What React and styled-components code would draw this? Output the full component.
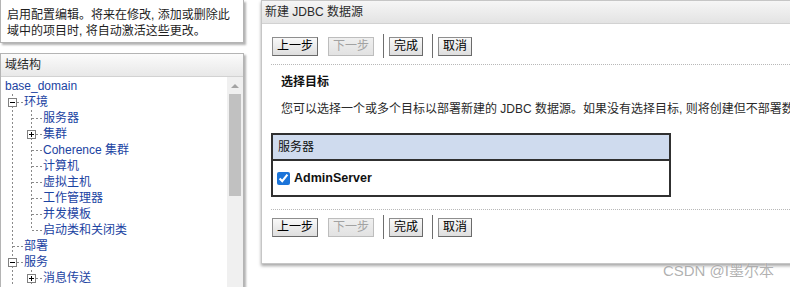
import React from 'react';
import styled, { createGlobalStyle, css } from 'styled-components';

const GlobalStyle = createGlobalStyle`
  html, body {
    margin: 0;
    padding: 0;
    background: #ffffff;
    overflow: hidden;
  }
  body {
    font-family: "Liberation Sans", "Noto Sans CJK SC", sans-serif;
    font-size: 12px;
    color: #222;
  }
`;

// 트리 데이터: cells = 앞쪽 연결선 종류, toggle = 펼침 박스
const treeRows = [
  { label: 'base_domain', cells: [] },
  { label: '环境', cells: ['tee'], toggle: 'minus' },
  { label: '服务器', cells: ['pipe', 'tee'] },
  { label: '集群', cells: ['pipe', 'tee'], toggle: 'plus' },
  { label: 'Coherence 集群', cells: ['pipe', 'tee'] },
  { label: '计算机', cells: ['pipe', 'tee'] },
  { label: '虚拟主机', cells: ['pipe', 'tee'] },
  { label: '工作管理器', cells: ['pipe', 'tee'] },
  { label: '并发模板', cells: ['pipe', 'tee'] },
  { label: '启动类和关闭类', cells: ['pipe', 'elbow'] },
  { label: '部署', cells: ['tee'] },
  { label: '服务', cells: ['tee'], toggle: 'minus' },
  { label: '消息传送', cells: ['pipe', 'tee'], toggle: 'plus' },
];

const WizardButtons = () => (
  <StButtonBar>
    <StButton>上一步</StButton>
    <StButton disabled>下一步</StButton>
    <StSeparator />
    <StButton>完成</StButton>
    <StSeparator />
    <StButton>取消</StButton>
  </StButtonBar>
);

const App = () => {
  return (
    <>
      <GlobalStyle />
      <StPage>
        <StLeftCol>
          <StHelpBox>
            启用配置编辑。将来在修改, 添加或删除此
            <br />
            域中的项目时, 将自动激活这些更改。
          </StHelpBox>

          <StTreePanel>
            <StPanelHeader>域结构</StPanelHeader>
            <StTreeBody>
              <StTree>
                {treeRows.map((row) => (
                  <StTreeRow key={row.label}>
                    {row.cells.map((cell, i) => (
                      <StGutter key={i} $kind={cell}>
                        {row.toggle && i === row.cells.length - 1 && (
                          <StToggle $plus={row.toggle === 'plus'} />
                        )}
                      </StGutter>
                    ))}
                    <StTreeLink>{row.label}</StTreeLink>
                  </StTreeRow>
                ))}
              </StTree>
              <StScrollbar>
                <StScrollArrow />
                <StScrollThumb />
              </StScrollbar>
            </StTreeBody>
          </StTreePanel>
        </StLeftCol>

        <StMainPanel>
          <StPanelHeader $main>新建 JDBC 数据源</StPanelHeader>
          <StContent>
            <WizardButtons />
            <StDivider />
            <StSectionTitle>选择目标</StSectionTitle>
            <StDescription>
              您可以选择一个或多个目标以部署新建的 JDBC 数据源。如果没有选择目标, 则将创建但不部署数
            </StDescription>
            <StTable>
              <StTableHead>服务器</StTableHead>
              <StTableRow>
                <StCheckbox type='checkbox' checked readOnly />
                <StServerName>AdminServer</StServerName>
              </StTableRow>
            </StTable>
            <StDivider $bottom />
            <WizardButtons />
          </StContent>
        </StMainPanel>

        <StWatermark>CSDN @I墨尔本</StWatermark>
      </StPage>
    </>
  );
};

export default App;

const StPage = styled.div`
  position: relative;
  width: 790px;
  height: 287px;
  overflow: hidden;
  display: flex;
  align-items: flex-start;
`;

const StLeftCol = styled.div`
  width: 244px;
  flex-shrink: 0;
  display: flex;
  flex-direction: column;
`;

const StHelpBox = styled.div`
  box-sizing: border-box;
  width: 244px;
  padding: 7px 6px 3px;
  line-height: 16px;
  color: #1e1e1e;
  background: #ffffff;
  border: 1px solid #b4b4b4;
  border-top: none;
  box-shadow: 2px 2px 2px rgba(0, 0, 0, 0.3);
`;

const StTreePanel = styled.div`
  box-sizing: border-box;
  width: 244px;
  height: 300px;
  margin-top: 10px;
  background: #ffffff;
  border: 1px solid #b4b4b4;
  box-shadow: 2px 2px 2px rgba(0, 0, 0, 0.3);
  display: flex;
  flex-direction: column;
`;

const StPanelHeader = styled.div`
  height: 22px;
  line-height: 22px;
  padding-left: 4px;
  color: #2a2a2a;
  background: linear-gradient(#fbfbfb, #e8e8e8);
  border-bottom: 1px solid #d2d2d2;
  white-space: nowrap;
  ${(props) =>
    props.$main &&
    css`
      padding-left: 3px;
      background: linear-gradient(#f6f6f6, #e3e3e3);
    `}
`;

const StTreeBody = styled.div`
  flex: 1;
  display: flex;
  min-height: 0;
`;

const StTree = styled.div`
  flex: 1;
  padding: 1px 0 0 4px;
  overflow: hidden;
`;

const StTreeRow = styled.div`
  display: flex;
  height: 16px;
  line-height: 16px;
  white-space: nowrap;
`;

const dash = '#8a8a8a';

const StGutter = styled.span`
  position: relative;
  width: 19px;
  height: 16px;
  flex-shrink: 0;

  &::before {
    content: '';
    position: absolute;
    left: 7px;
    width: 1px;
    top: 0;
    background: repeating-linear-gradient(to bottom, ${dash} 0 2px, transparent 2px 4px);
    ${(props) =>
      props.$kind === 'elbow'
        ? css`height: 8px;`
        : css`height: 16px;`}
  }

  &::after {
    content: '';
    position: absolute;
    top: 8px;
    left: 8px;
    width: 10px;
    height: 1px;
    display: ${(props) => (props.$kind === 'pipe' ? 'none' : 'block')};
    background: repeating-linear-gradient(to right, ${dash} 0 2px, transparent 2px 4px);
  }
`;

const StToggle = styled.span`
  position: absolute;
  z-index: 1;
  left: 3px;
  top: 4px;
  box-sizing: border-box;
  width: 9px;
  height: 9px;
  background: #ffffff;
  border: 1px solid #808080;

  &::before {
    content: '';
    position: absolute;
    left: 1px;
    top: 3px;
    width: 5px;
    height: 1px;
    background: #000;
  }

  &::after {
    content: '';
    position: absolute;
    left: 3px;
    top: 1px;
    width: 1px;
    height: 5px;
    background: #000;
    display: ${(props) => (props.$plus ? 'block' : 'none')};
  }
`;

const StTreeLink = styled.span`
  color: #1b43a2;
`;

const StScrollbar = styled.div`
  width: 16px;
  background: #f0f0f0;
  display: flex;
  flex-direction: column;
  align-items: center;
`;

const StScrollArrow = styled.div`
  height: 17px;
  width: 16px;
  position: relative;

  &::before {
    content: '';
    position: absolute;
    left: 4px;
    top: 7px;
    border-left: 4px solid transparent;
    border-right: 4px solid transparent;
    border-bottom: 4px solid #a3a3a3;
  }
`;

const StScrollThumb = styled.div`
  width: 12px;
  height: 102px;
  background: #c1c1c1;
`;

const StMainPanel = styled.div`
  box-sizing: border-box;
  margin-left: 17px;
  width: 600px;
  height: 264px;
  flex-shrink: 0;
  background: #ffffff;
  border: 1px solid #c6c6c6;
  box-shadow: 0 2px 3px rgba(0, 0, 0, 0.35);
`;

const StContent = styled.div`
  padding-left: 9px;
`;

const StButtonBar = styled.div`
  display: flex;
  align-items: center;
  height: 24px;
  margin-top: 10px;
  padding-left: 1px;
`;

const StButton = styled.button`
  height: 19px;
  padding: 0 4px;
  margin-right: 10px;
  font-family: inherit;
  font-size: 12px;
  line-height: 17px;
  color: #000;
  background: linear-gradient(#f9f9f9, #dedede);
  border: 1px solid #8e8e8e;
  border-right-color: #6a6a6a;
  border-bottom-color: #6a6a6a;
  border-radius: 0;
  cursor: pointer;

  &:disabled {
    color: #a2a2a2;
    background: linear-gradient(#efefef, #e2e2e2);
    border-color: #bdbdbd;
    cursor: default;
  }

  &:last-child {
    margin-right: 0;
  }
`;

const StSeparator = styled.span`
  width: 1px;
  height: 24px;
  background: #6e6e6e;
  margin: 0 5px 0 -1px;
`;

const StDivider = styled.div`
  margin-top: ${(props) => (props.$bottom ? '12px' : '6px')};
  height: 0;
  border-top: 1px dotted #b8b8b8;
  & + ${StButtonBar} {
    margin-top: 5px;
  }
`;

const StSectionTitle = styled.div`
  margin-top: 9px;
  padding-left: 10px;
  line-height: 16px;
  font-weight: bold;
  color: #111;
`;

const StDescription = styled.div`
  margin-top: 11px;
  padding-left: 10px;
  line-height: 16px;
  color: #2a2a2a;
  white-space: nowrap;
`;

const StTable = styled.div`
  box-sizing: border-box;
  width: 400px;
  margin-top: 16px;
  border: 2px solid #303030;
`;

const StTableHead = styled.div`
  height: 24px;
  line-height: 24px;
  padding-left: 5px;
  color: #111;
  background: #cfdbee;
  border-bottom: 2px solid #303030;
`;

const StTableRow = styled.div`
  height: 34px;
  display: flex;
  align-items: center;
  padding-left: 4px;
  gap: 4px;
`;

const StCheckbox = styled.input`
  width: 13px;
  height: 13px;
  margin: 0;
  accent-color: #1b74d9;
`;

const StServerName = styled.span`
  font-weight: bold;
  font-size: 12.5px;
  color: #111;
`;

const StWatermark = styled.div`
  position: absolute;
  right: 16px;
  top: 259px;
  font-size: 15px;
  color: rgba(110, 110, 110, 0.55);
  text-shadow: 0 0 1px rgba(255, 255, 255, 0.9);
  white-space: nowrap;
  pointer-events: none;
`;
